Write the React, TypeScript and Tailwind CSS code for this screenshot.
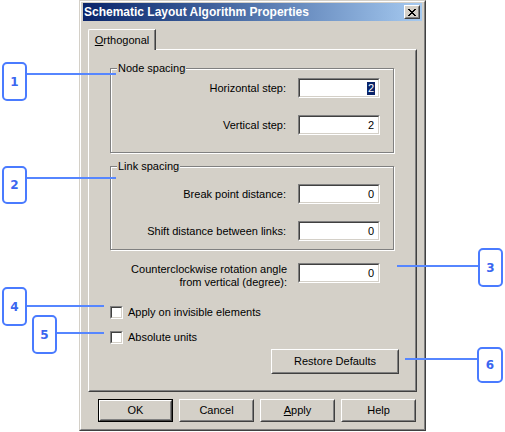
import React from "react";

const font = { fontFamily: '"Liberation Sans", Arial, sans-serif' };

const Field = ({ value, selected }: { value: string; selected?: boolean }) => (
  <div className="w-[82px] h-[20px] shrink-0 border border-t-[#808080] border-l-[#808080] border-r-white border-b-white">
    <div className="h-full border border-t-[#404040] border-l-[#404040] border-r-[#d4d0c8] border-b-[#d4d0c8] bg-white flex items-center justify-end pr-[3px] text-[11px] text-black">
      {selected ? <span className="bg-[#0a246a] text-white px-px leading-[13px]">{value}</span> : <span className="px-px">{value}</span>}
    </div>
  </div>
);

const Row = ({ label, value, selected, className = "" }: { label: string; value: string; selected?: boolean; className?: string }) => (
  <div className={`flex items-center justify-end gap-[12px] pr-[13px] ${className}`}>
    <span className="text-[11px] leading-[13px] text-black whitespace-nowrap">{label}</span>
    <Field value={value} selected={selected} />
  </div>
);

const Group = ({ title, className = "", children }: { title: string; className?: string; children: React.ReactNode }) => (
  <div className={`relative ml-[20px] w-[284px] border border-[#808080] shadow-[inset_1px_1px_0_#fff,1px_1px_0_#fff] ${className}`}>
    <span className="absolute left-[6px] -top-[7px] bg-[#d4d0c8] px-px text-[11px] leading-[13px] text-black">{title}</span>
    {children}
  </div>
);

const Check = ({ label, className = "" }: { label: string; className?: string }) => (
  <div className={`ml-[20px] flex items-center gap-[5px] ${className}`}>
    <div className="w-[13px] h-[13px] border border-t-[#808080] border-l-[#808080] border-r-white border-b-white">
      <div className="h-full border border-t-[#404040] border-l-[#404040] border-r-[#d4d0c8] border-b-[#d4d0c8] bg-white" />
    </div>
    <span className="text-[11px] leading-[13px] text-black">{label}</span>
  </div>
);

const Button = ({ children, w = "w-[75px]", h = "h-[23px]", isDefault }: { children: React.ReactNode; w?: string; h?: string; isDefault?: boolean }) => (
  <div className={`${w} ${h} ${isDefault ? "border border-black" : ""}`}>
    <div className="h-full border border-t-white border-l-white border-r-[#404040] border-b-[#404040]">
      <div className="h-full border border-t-[#d4d0c8] border-l-[#d4d0c8] border-r-[#808080] border-b-[#808080] flex items-center justify-center text-[11px] text-black">
        {children}
      </div>
    </div>
  </div>
);

const Callout = ({ n, box, line }: { n: string; box: string; line: string }) => (
  <>
    <div className={`absolute h-[2px] bg-[#5686ff] ${line}`} />
    <div className={`absolute border-2 border-[#4a7bff] rounded-[5px] bg-white flex items-center justify-center text-[12px] font-bold text-[#3a66f0] ${box}`} style={{ fontFamily: '"DejaVu Sans", Verdana, sans-serif' }}>
      {n}
    </div>
  </>
);

export default function App() {
  return (
    <div className="relative w-[505px] h-[432px] bg-white overflow-hidden" style={font}>
      {/* dialog */}
      <div className="ml-[79px] w-[347px] h-[431px] border border-t-[#d4d0c8] border-l-[#d4d0c8] border-r-[#404040] border-b-[#404040] bg-[#d4d0c8]">
        <div className="h-full border border-t-white border-l-white border-r-[#808080] border-b-[#808080] px-[2px] pt-px pb-[2px] flex flex-col">
          {/* title bar */}
          <div className="h-[18px] flex items-center justify-between pl-[1px] pr-[2px] bg-gradient-to-r from-[#0a246a] to-[#a6caf0]">
            <span className="text-[12px] font-bold text-white whitespace-nowrap">Schematic Layout Algorithm Properties</span>
            <div className="w-[16px] h-[14px] border border-t-white border-l-white border-r-[#404040] border-b-[#404040] bg-[#d4d0c8]">
              <div className="h-full border border-r-[#808080] border-b-[#808080] border-t-[#d4d0c8] border-l-[#d4d0c8] flex items-center justify-center">
                <svg width="8" height="7" viewBox="0 0 8 7">
                  <path d="M0 0h2v1h-2zM6 0h2v1h-2zM1 1h2v1h-2zM5 1h2v1h-2zM2 2h4v1h-4zM3 3h2v1h-2zM2 4h4v1h-4zM1 5h2v1h-2zM5 5h2v1h-2zM0 6h2v1h-2zM6 6h2v1h-2z" fill="#000" />
                </svg>
              </div>
            </div>
          </div>

          {/* tab strip */}
          <div className="mt-[8px] ml-[5px] flex">
            <div className="relative z-10 h-[21px] -mb-px w-[68px] border-l border-t border-white border-r-[#404040] border-r rounded-tl-[2px] bg-[#d4d0c8] shadow-[inset_-1px_0_0_#808080] flex items-center justify-center text-[11px] text-black">
              <span><span className="underline">O</span>rthogonal</span>
            </div>
          </div>

          {/* tab panel */}
          <div className="ml-[5px] w-[329px] h-[343px] border border-t-white border-l-white border-r-[#404040] border-b-[#404040]">
            <div className="h-full border border-transparent border-r-[#808080] border-b-[#808080] pt-[17px]">
              <Group title="Node spacing" className="h-[85px]">
                <Row label="Horizontal step:" value="2" selected className="mt-[9px]" />
                <Row label="Vertical step:" value="2" className="mt-[17px]" />
              </Group>

              <Group title="Link spacing" className="h-[84px] mt-[13px]">
                <Row label="Break point distance:" value="0" className="mt-[17px]" />
                <Row label="Shift distance between links:" value="0" className="mt-[17px]" />
              </Group>

              <div className="ml-[20px] w-[284px] mt-[13px] flex items-start justify-end gap-[11px] pr-[14px]">
                <span className="text-[11px] leading-[13px] text-black text-right whitespace-nowrap">
                  Counterclockwise rotation angle
                  <br />
                  from vertical (degree):
                </span>
                <Field value="0" />
              </div>

              <Check label="Apply on invisible elements" className="mt-[17px]" />
              <Check label="Absolute units" className="mt-[12px]" />

              <div className="ml-[181px] mt-[5px]">
                <Button w="w-[128px]" h="h-[25px]">Restore Defaults</Button>
              </div>
            </div>
          </div>

          {/* buttons */}
          <div className="mt-[7px] ml-[15px] flex gap-[6px]">
            <Button isDefault>OK</Button>
            <Button>Cancel</Button>
            <Button>
              <span><span className="underline">A</span>pply</span>
            </Button>
            <Button>Help</Button>
          </div>
        </div>
      </div>

      {/* callouts */}
      <Callout n="1" box="left-[2px] top-[62px] w-[25px] h-[39px]" line="left-[26px] top-[73px] w-[90px]" />
      <Callout n="2" box="left-[2px] top-[166px] w-[25px] h-[38px]" line="left-[26px] top-[177px] w-[90px]" />
      <Callout n="3" box="left-[478px] top-[248px] w-[25px] h-[39px]" line="left-[397px] top-[265px] w-[82px]" />
      <Callout n="4" box="left-[2px] top-[287px] w-[25px] h-[39px]" line="left-[26px] top-[305px] w-[78px]" />
      <Callout n="5" box="left-[32px] top-[315px] w-[25px] h-[39px]" line="left-[56px] top-[332px] w-[48px]" />
      <Callout n="6" box="left-[477px] top-[347px] w-[26px] h-[36px]" line="left-[405px] top-[358px] w-[73px]" />
    </div>
  );
}
